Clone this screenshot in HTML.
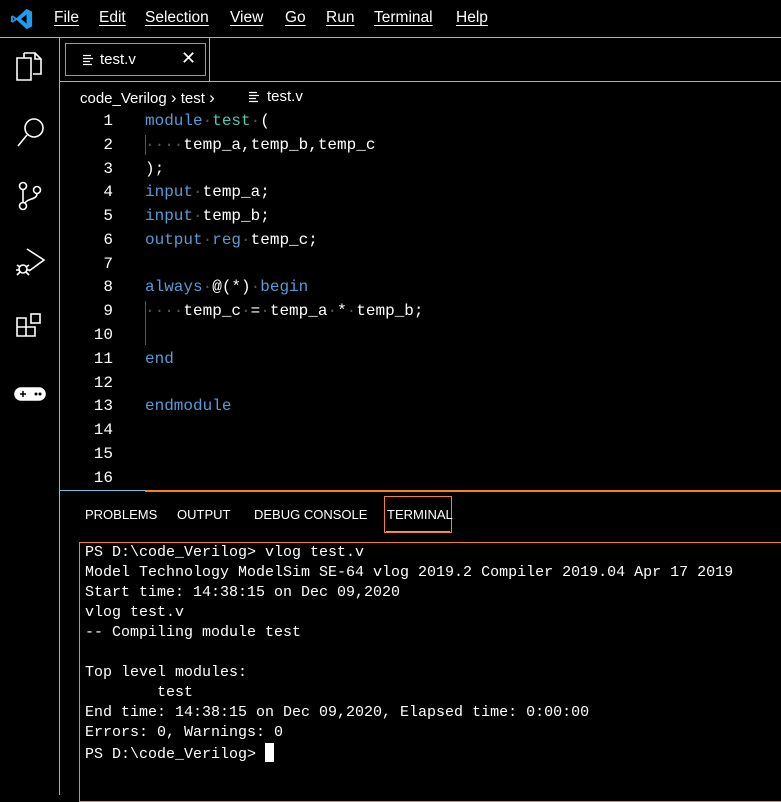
<!DOCTYPE html>
<html><head><meta charset="utf-8"><style>
*{margin:0;padding:0;box-sizing:border-box}
body{width:781px;height:795px;background:#000;color:#fff;font-family:"Liberation Sans",sans-serif;position:relative;overflow:hidden}
.abs{position:absolute}
.menu span{position:absolute;top:9px;font-size:15.5px;text-decoration:underline;text-decoration-thickness:1px;text-underline-offset:3px}
.ln{position:absolute;left:60px;width:53px;text-align:right;font-family:"Liberation Mono",monospace;font-size:16px;color:#fff;height:24px;line-height:24px}
.cl{position:absolute;left:145px;font-family:"Liberation Mono",monospace;font-size:16px;white-space:pre;height:24px;line-height:24px;color:#fff}
.k{color:#569cd6}.t{color:#4ec9b0}.d{color:#555}
.term div{height:20px;line-height:20px;white-space:pre}
</style></head><body>
<svg class="abs" style="left:10px;top:8px" width="24" height="22" viewBox="0 0 24 24"><path d="M17 1 L23 4 V20 L17 23 L6 13 L2 16 L0 15 V9 L2 8 L6 11 Z M17 7 L11 12 L17 17 Z M2 10 V14 L4 12 Z" fill="#1f9cf0"/></svg>
<div class="menu">
<span style="left:54px">File</span><span style="left:99px">Edit</span><span style="left:145px">Selection</span><span style="left:230px">View</span><span style="left:285px">Go</span><span style="left:326px">Run</span><span style="left:374px">Terminal</span><span style="left:456px">Help</span>
</div>
<div class="abs" style="left:0;top:37px;width:781px;height:1px;background:#6fc3df"></div>
<div class="abs" style="left:59px;top:38px;width:1px;height:757px;background:#6fc3df"></div>
<svg class="abs" style="left:0;top:38px" width="59" height="380" fill="none" stroke="#fff" stroke-width="1.6">
<path d="M24 15 H35 L41 21 V36 H33 M24 15 V20 M17 20 H31 V42 H17 Z M35 15 V21 H41"/>
<circle cx="34" cy="90" r="9"/><path d="M27 97 L18 108"/>
<circle cx="23" cy="148" r="3.5"/><circle cx="23" cy="168" r="3.5"/><circle cx="37" cy="152" r="3.5"/><path d="M23 151.5 V164.5 M37 155.5 C37 162 28 160 25 165"/>
<path d="M27 211 L44 222 L29 233"/><circle cx="23" cy="231" r="4"/><path d="M17 227 L20 229 M29 227 L26 229 M16 232 H19 M27 232 H30 M17 237 L20 234 M29 237 L26 234"/>
<path d="M17 280 H26 V298 H17 Z M17 289 H35 V298 H26 M26 280 V289"/><rect x="31" y="276" width="9" height="9"/>
<path d="M21 350 H39 A5 5 0 0 1 39 362 H21 A5 5 0 0 1 21 350 Z" fill="#fff"/>
<path d="M20 356 H26 M23 353 V359" stroke="#000" stroke-width="1.5"/><circle cx="36" cy="356" r="1.5" fill="#000" stroke="none"/><circle cx="40" cy="356" r="1.5" fill="#000" stroke="none"/>
</svg>
<div class="abs" style="left:65px;top:43px;width:141px;height:33px;border:1px solid #f38518"></div>
<div class="abs" style="left:209px;top:38px;width:1px;height:43px;background:#6fc3df"></div>
<div class="abs" style="left:60px;top:81px;width:721px;height:1px;background:#6fc3df"></div>
<svg class="abs" style="left:82px;top:54px" width="12" height="12" stroke="#fff" stroke-width="1.2"><path d="M1 1.5H9 M1 4.5H11 M1 7.5H8 M1 10.5H10"/></svg>
<div class="abs" style="left:100px;top:51px;font-size:15px">test.v</div>
<div class="abs" style="left:181px;top:48px;font-size:18px">✕</div>
<div class="abs" style="left:80px;top:88px;font-size:15px;white-space:pre">code_Verilog <span style="font-size:17px">›</span> test <span style="font-size:17px">›</span></div>
<svg class="abs" style="left:248px;top:91px" width="12" height="12" stroke="#fff" stroke-width="1.2"><path d="M1 1.5H9 M1 4.5H11 M1 7.5H8 M1 10.5H10"/></svg>
<div class="abs" style="left:267px;top:88px;font-size:15px">test.v</div>
<div class="ln" style="top:109px">1</div><div class="cl" style="top:109px"><span class="k">module</span><span class="d">·</span><span class="t">test</span><span class="d">·</span>(</div>
<div class="ln" style="top:133px">2</div><div class="cl" style="top:133px"><span class="d">····</span>temp_a,temp_b,temp_c</div>
<div class="ln" style="top:157px">3</div><div class="cl" style="top:157px">);</div>
<div class="ln" style="top:180px">4</div><div class="cl" style="top:180px"><span class="k">input</span><span class="d">·</span>temp_a;</div>
<div class="ln" style="top:204px">5</div><div class="cl" style="top:204px"><span class="k">input</span><span class="d">·</span>temp_b;</div>
<div class="ln" style="top:228px">6</div><div class="cl" style="top:228px"><span class="k">output</span><span class="d">·</span><span class="k">reg</span><span class="d">·</span>temp_c;</div>
<div class="ln" style="top:252px">7</div>
<div class="ln" style="top:275px">8</div><div class="cl" style="top:275px"><span class="k">always</span><span class="d">·</span>@(*)<span class="d">·</span><span class="k">begin</span></div>
<div class="ln" style="top:299px">9</div><div class="cl" style="top:299px"><span class="d">····</span>temp_c<span class="d">·</span>=<span class="d">·</span>temp_a<span class="d">·</span>*<span class="d">·</span>temp_b;</div>
<div class="ln" style="top:323px">10</div>
<div class="ln" style="top:347px">11</div><div class="cl" style="top:347px"><span class="k">end</span></div>
<div class="ln" style="top:371px">12</div>
<div class="ln" style="top:394px">13</div><div class="cl" style="top:394px"><span class="k">endmodule</span></div>
<div class="ln" style="top:418px">14</div>
<div class="ln" style="top:442px">15</div>
<div class="ln" style="top:466px">16</div>
<div class="abs" style="left:145px;top:135px;width:1px;height:20px;background:#555"></div>
<div class="abs" style="left:145px;top:301px;width:1px;height:44px;background:#555"></div>
<div class="abs" style="left:60px;top:490px;width:85px;height:1px;background:#6fc3df"></div>
<div class="abs" style="left:145px;top:490px;width:636px;height:2px;background:#f38518"></div>
<div class="abs" style="left:85px;top:507px;font-size:13px;white-space:pre">PROBLEMS</div>
<div class="abs" style="left:177px;top:507px;font-size:13px">OUTPUT</div>
<div class="abs" style="left:254px;top:507px;font-size:13px">DEBUG CONSOLE</div>
<div class="abs" style="left:384px;top:496px;width:68px;height:37px;border:1px solid #f38518"></div>
<div class="abs" style="left:387px;top:507px;font-size:13px">TERMINAL</div>
<div class="abs" style="left:386px;top:531px;width:64px;height:1px;background:#6fc3df"></div>
<div class="abs" style="left:79px;top:542px;width:710px;height:260px;border:1px solid #f38518"></div>
<div class="abs term" style="left:85px;top:543px;font-family:'Liberation Mono',monospace;font-size:15px">
<div>PS D:\code_Verilog&gt; vlog test.v</div>
<div>Model Technology ModelSim SE-64 vlog 2019.2 Compiler 2019.04 Apr 17 2019</div>
<div>Start time: 14:38:15 on Dec 09,2020</div>
<div>vlog test.v</div>
<div>-- Compiling module test</div>
<div> </div>
<div>Top level modules:</div>
<div>        test</div>
<div>End time: 14:38:15 on Dec 09,2020, Elapsed time: 0:00:00</div>
<div>Errors: 0, Warnings: 0</div>
<div>PS D:\code_Verilog&gt; <span style="display:inline-block;width:9px;height:19px;background:#fff;vertical-align:-4px"></span></div>
</div>
</body></html>
